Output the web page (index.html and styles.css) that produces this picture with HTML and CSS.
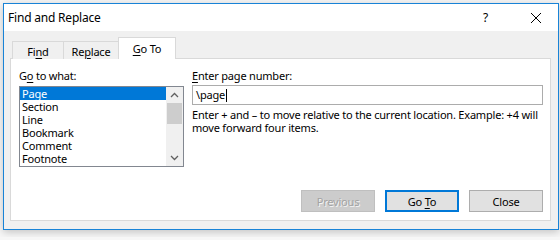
FILE: index.html
```html
<!DOCTYPE html>
<html>
<head>
<meta charset="utf-8">
<link rel="stylesheet" href="styles.css">
</head>
<body>
<div class="window">
  <div class="titlebar">
    <span class="title">Find and Replace</span>
    <span class="help">?</span>
    <span class="close-x"><svg width="12" height="12" viewBox="0 0 12 12"><path d="M1 1 L11 11 M11 1 L1 11" stroke="#000" stroke-width="1" fill="none"/></svg></span>
  </div>
  <div class="client">
    <div class="tabs">
      <div class="tab"><span>Fi<u>n</u>d</span></div>
      <div class="tab"><span>Re<u>p</u>lace</span></div>
      <div class="tab active"><span><u>G</u>o To</span></div>
    </div>
    <div class="panel">
      <div class="cols">
        <div class="left">
          <div class="label">G<u>o</u> to what:</div>
          <div class="listbox">
            <ul class="items">
              <li class="sel">Page</li>
              <li>Section</li>
              <li>Line</li>
              <li>Bookmark</li>
              <li>Comment</li>
              <li>Footnote</li>
            </ul>
            <div class="scroll">
              <div class="arrow"><svg width="9" height="6" viewBox="0 0 9 6"><path d="M1 5 L4.5 1.5 L8 5" stroke="#606060" stroke-width="1.3" fill="none"/></svg></div>
              <div class="thumb"></div>
              <div class="track"></div>
              <div class="arrow"><svg width="9" height="6" viewBox="0 0 9 6"><path d="M1 1 L4.5 4.5 L8 1" stroke="#606060" stroke-width="1.3" fill="none"/></svg></div>
            </div>
          </div>
        </div>
        <div class="right">
          <div class="label"><u>E</u>nter page number:</div>
          <div class="input"><span>\page</span><span class="caret"></span></div>
          <p class="hint">Enter + and – to move relative to the current location. Example: +4 will move forward four items.</p>
        </div>
      </div>
      <div class="buttons">
        <div class="btn disabled"><span>Previous</span></div>
        <div class="btn default"><span>Go <u>T</u>o</span></div>
        <div class="btn"><span>Close</span></div>
      </div>
    </div>
  </div>
</div>
</body>
</html>
```
FILE: styles.css
```css
html, body {
  margin: 0;
  padding: 0;
}
body {
  width: 560px;
  height: 237px;
  background: #f7f7f7;
  font-family: "Noto Sans", "Open Sans", sans-serif;
  font-size: 11px;
  letter-spacing: -0.2px;
  color: #000;
  overflow: hidden;
}
u { text-decoration: underline; text-underline-offset: 2px; }
.window {
  margin: 3px 0 0 3px;
  width: 554px;
  height: 225px;
  border: 1px solid #1883d7;
  background: #f0f0f0;
  box-shadow: 0 2px 8px rgba(0,0,0,0.22);
  display: flex;
  flex-direction: column;
}
.titlebar {
  height: 27px;
  background: #fff;
  display: flex;
  align-items: center;
  padding-left: 4px;
}
.title {
  font-size: 12px;
  flex: 1;
}
.help {
  font-size: 12px;
  width: 12px;
  margin-right: 35px;
}
.close-x {
  width: 12px;
  height: 12px;
  margin-right: 16px;
  display: flex;
}
.client {
  flex: 1;
  display: flex;
  flex-direction: column;
  padding: 7px 7px 8px 6px;
}
.tabs {
  display: flex;
  align-items: flex-end;
  height: 21px;
  margin-left: 2px;
  position: relative;
  z-index: 1;
  margin-bottom: -1px;
}
.tab {
  height: 18px;
  box-sizing: border-box;
  border: 1px solid #d9d9d9;
  border-bottom: none;
  border-right: none;
  background: #f0f0f0;
  display: flex;
  align-items: center;
  justify-content: center;
  padding-top: 2px;
}
.tab:nth-child(1) { width: 51px; }
.tab:nth-child(2) { width: 55px; }
.tab.active {
  width: 58px;
  height: 22px;
  background: #fff;
  border-right: 1px solid #d9d9d9;
  padding-top: 0;
}
.panel {
  flex: 1;
  background: #fff;
  border: 1px solid #d9d9d9;
  display: flex;
  flex-direction: column;
  padding: 9px 7px 0 8px;
}
.cols {
  display: flex;
  gap: 8px;
}
.left { width: 165px; }
.right { flex: 1; }
.label {
  height: 16px;
  line-height: 16px;
}
.listbox {
  margin-top: 2px;
  height: 79px;
  border: 1px solid #828790;
  display: flex;
}
.items {
  list-style: none;
  margin: 0;
  padding: 0;
  flex: 1;
}
.items li {
  height: 13px;
  line-height: 13px;
  padding-left: 2px;
}
.items li.sel {
  background: #0078d7;
  color: #fff;
}
.scroll {
  width: 17px;
  background: #f0f0f0;
  display: flex;
  flex-direction: column;
}
.arrow {
  height: 16px;
  display: flex;
  align-items: center;
  justify-content: center;
}
.thumb {
  height: 21px;
  margin: 0 1px;
  background: #cdcdcd;
}
.track { flex: 1; }
.input {
  margin-top: 1px;
  height: 18px;
  border: 1px solid #acacac;
  line-height: 18px;
  padding-left: 3px;
  display: flex;
  align-items: center;
}
.caret {
  width: 1px;
  height: 13px;
  background: #000;
  margin-left: 1px;
}
.hint {
  margin: 3px 0 0 0;
  line-height: 13px;
}
.buttons {
  display: flex;
  justify-content: flex-end;
  gap: 10px;
  margin-top: auto;
  margin-bottom: 8px;
}
.btn {
  width: 74px;
  height: 22px;
  box-sizing: border-box;
  border: 1px solid #adadad;
  background: #e1e1e1;
  display: flex;
  align-items: center;
  justify-content: center;
}
.btn.disabled {
  background: #cccccc;
  border-color: #bfbfbf;
  color: #a3a3a3;
  text-shadow: 1px 1px 0 #f4f4f4;
}
.btn.default {
  border: 2px solid #0078d7;
}
```
